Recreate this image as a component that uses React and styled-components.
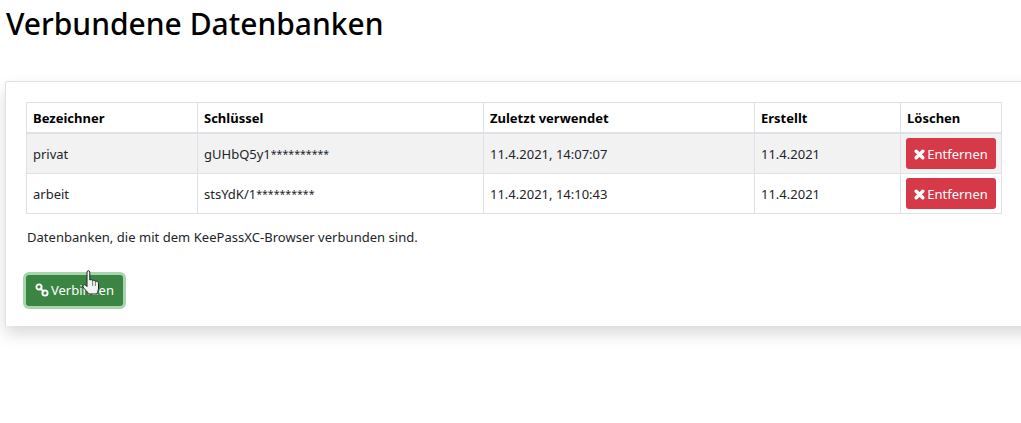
import React from "react";
import styled, { createGlobalStyle } from "styled-components";

const GlobalStyle = createGlobalStyle`
    html, body {
        margin: 0;
        padding: 0;
        background: #fff;
        overflow: hidden;
    }
    body {
        font-family: "Noto Sans", "Open Sans", sans-serif;
        font-size: 13px;
        color: #212529;
    }
`;

const Page = styled.div`
    width: 1021px;
    height: 423px;
    overflow: hidden;
    padding-left: 5px;
    box-sizing: border-box;
`;

const Title = styled.h1`
    margin: 0;
    padding: 3px 0 0 1px;
    height: 81px;
    box-sizing: border-box;
    font-size: 30px;
    line-height: 42px;
    font-weight: 500;
    color: #000;
`;

const Card = styled.div`
    width: 1040px;
    height: 245px;
    box-sizing: border-box;
    padding: 20px 20px 0 20px;
    background: #fff;
    border: 1px solid #dee2e6;
    border-right: 0;
    border-bottom: 0;
    border-radius: 3px 0 0 0;
    box-shadow: 0 8px 16px rgba(0, 0, 0, 0.15);
`;

const Table = styled.table`
    width: 975px;
    table-layout: fixed;
    border-collapse: collapse;
    color: #212529;
`;

const HeadCell = styled.th`
    height: 29px;
    padding: 0 6px;
    text-align: left;
    font-size: 13px;
    font-weight: 700;
    color: #000;
    border: 1px solid #dee2e6;
    border-bottom-width: 2px;
`;

const Row = styled.tr`
    background: ${props => (props.$shaded ? "#f2f2f2" : "#fff")};
`;

const Cell = styled.td`
    height: 40px;
    padding: 2px 6px 0;
    box-sizing: border-box;
    border: 1px solid #dee2e6;
    white-space: nowrap;
`;

const ActionCell = styled(Cell)`
    padding: 0 5px;
`;

const Stars = styled.span`
    font-size: 10.6px;
    position: relative;
    top: -1px;
`;

const Button = styled.button`
    display: inline-flex;
    align-items: center;
    justify-content: center;
    gap: 2px;
    box-sizing: border-box;
    border: 0;
    border-radius: 3px;
    font-family: inherit;
    font-size: 13px;
    color: #fff;
    padding: 0;
`;

const RemoveButton = styled(Button)`
    width: 90px;
    height: 31px;
    padding-top: 2px;
    vertical-align: middle;
    background: #d63948;
`;

const Note = styled.p`
    margin: 14px 0 0 1px;
    line-height: 18px;
    letter-spacing: 0.035px;
`;

const ConnectWrap = styled.div`
    position: relative;
    margin-top: 29px;
    width: 97px;
`;

const ConnectButton = styled(Button)`
    width: 97px;
    height: 31px;
    background: #3a8541;
    box-shadow: 0 0 0 3px #a9d5ae;
`;

const Pointer = styled.svg`
    position: absolute;
    left: 56px;
    top: -5px;
    width: 18px;
    height: 25px;
`;

const rows = [
    { name: "privat", key: "gUHbQ5y1", used: "11.4.2021, 14:07:07", created: "11.4.2021" },
    { name: "arbeit", key: "stsYdK/1", used: "11.4.2021, 14:10:43", created: "11.4.2021" },
];

function CrossIcon() {
    return (
        <svg width="11" height="11" viewBox="0 0 11 11">
            <path d="M2.2 2.2 L8.8 8.8 M8.8 2.2 L2.2 8.8" stroke="#fff" strokeWidth="3.4" strokeLinecap="round" />
        </svg>
    );
}

function LinkIcon() {
    return (
        <svg width="14" height="14" viewBox="0 0 14 14" fill="none" stroke="#fff" strokeWidth="1.9">
            <circle cx="4" cy="4" r="2.6" />
            <circle cx="10" cy="10" r="2.6" />
            <path d="M5 5 L9 9" strokeWidth="2.2" />
        </svg>
    );
}

export default function App() {
    return (
        <Page>
            <GlobalStyle />
            <Title>Verbundene Datenbanken</Title>
            <Card>
                <Table>
                    <colgroup>
                        <col style={{ width: 171 }} />
                        <col style={{ width: 286 }} />
                        <col style={{ width: 271 }} />
                        <col style={{ width: 146 }} />
                        <col style={{ width: 101 }} />
                    </colgroup>
                    <thead>
                        <tr>
                            <HeadCell>Bezeichner</HeadCell>
                            <HeadCell>Schlüssel</HeadCell>
                            <HeadCell>Zuletzt verwendet</HeadCell>
                            <HeadCell>Erstellt</HeadCell>
                            <HeadCell>Löschen</HeadCell>
                        </tr>
                    </thead>
                    <tbody>
                        {rows.map((row, i) => (
                            <Row key={row.name} $shaded={i === 0}>
                                <Cell>{row.name}</Cell>
                                <Cell>{row.key}<Stars>**********</Stars></Cell>
                                <Cell>{row.used}</Cell>
                                <Cell>{row.created}</Cell>
                                <ActionCell>
                                    <RemoveButton><CrossIcon />Entfernen</RemoveButton>
                                </ActionCell>
                            </Row>
                        ))}
                    </tbody>
                </Table>
                <Note>Datenbanken, die mit dem KeePassXC-Browser verbunden sind.</Note>
                <ConnectWrap>
                    <ConnectButton><LinkIcon />Verbinden</ConnectButton>
                    <Pointer viewBox="0 0 18 25">
                        <path d="M5 2 C5 .3 7.8 .3 7.8 2 V10 C8.8 9.4 10.2 9.6 10.6 10.6 C11.6 10 13 10.3 13.4 11.4 C14.6 10.9 16.5 11.6 16.5 13.4 V18 C16.5 20.5 15.3 22 15 24 H6.5 C6 22 2.5 19.5 1 17 C.2 15.3 2.3 14 3.6 15.2 L5 16.6 Z" fill="#f1f3f2" stroke="#222" strokeWidth="1" />
                        <path d="M10.6 11 V16 M13.4 11.6 V16" stroke="#555" strokeWidth="0.8" fill="none" />
                    </Pointer>
                </ConnectWrap>
            </Card>
        </Page>
    );
}
